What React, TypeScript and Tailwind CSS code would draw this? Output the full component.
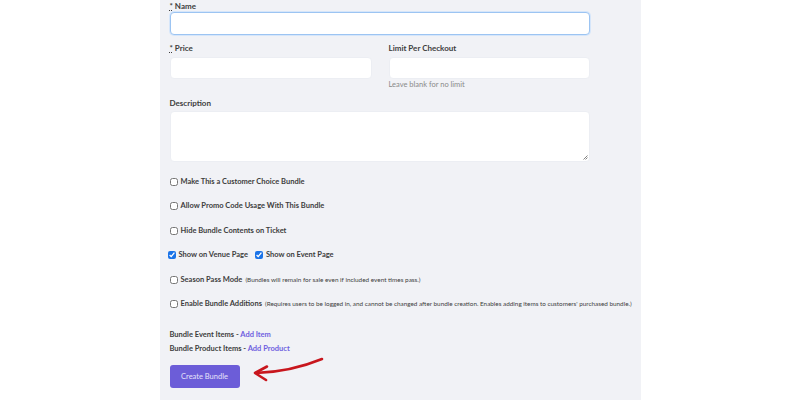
import React from "react";

function Check({ checked = false }: { checked?: boolean }) {
  return (
    <input
      type="checkbox"
      defaultChecked={checked}
      className="w-[8px] h-[8px] m-0 accent-[#1a73e8] shrink-0"
    />
  );
}

export default function App() {
  return (
    <div
      className="w-[800px] h-[400px] bg-white flex justify-center overflow-hidden relative"
      style={{ fontFamily: "Lato, 'Noto Sans', sans-serif" }}
    >
      <div className="w-[481px] h-full bg-[#f1f2f6] pl-[10px] pr-[51px] text-[#3d3d3d]">
        <div className="pt-[1px] h-[12px] text-[8px] leading-[10px] font-bold">
          <span className="underline decoration-dotted">*</span> Name
        </div>
        <div className="h-[23px] mt-[0px] bg-white rounded-[4px] border border-[#9cc4f2] shadow-[0_0_0_1px_#d6e6fa]" />

        <div className="flex gap-[17px] mt-[8px]">
          <div className="w-[202px]">
            <div className="h-[14px] text-[8px] leading-[10px] font-bold">
              <span className="underline decoration-dotted">*</span> Price
            </div>
            <div className="h-[22px] bg-white rounded-[4px] border border-[#eceef3]" />
          </div>
          <div className="flex-1">
            <div className="h-[14px] text-[8px] leading-[10px] font-bold">Limit Per Checkout</div>
            <div className="h-[22px] bg-white rounded-[4px] border border-[#eceef3]" />
            <div className="mt-[1px] text-[7.5px] leading-[10px] text-[#8a8a8a]">Leave blank for no limit</div>
          </div>
        </div>

        <div className="mt-[8px] h-[13px] text-[8px] leading-[10px] font-bold">Description</div>
        <div className="relative h-[51px] bg-white rounded-[4px] border border-[#eceef3]">
          <svg className="absolute right-[1px] bottom-[1px]" width="5" height="5" viewBox="0 0 5 5">
            <path d="M4.5 0.5 L0.5 4.5 M4.5 2.5 L2.5 4.5" stroke="#666" strokeWidth="0.8" />
          </svg>
        </div>

        <div className="mt-[15px] flex flex-col gap-[14.4px] text-[7.5px] leading-[10px] font-bold">
          <label className="flex items-center gap-[3px] h-[10px]">
            <Check /> Make This a Customer Choice Bundle
          </label>
          <label className="flex items-center gap-[3px] h-[10px]">
            <Check /> Allow Promo Code Usage With This Bundle
          </label>
          <label className="flex items-center gap-[3px] h-[10px]">
            <Check /> Hide Bundle Contents on Ticket
          </label>
          <div className="flex items-center gap-[3px] h-[10px] -ml-[2px]">
            <Check checked /> <span>Show on Venue Page</span>
            <span className="w-[1px]" />
            <Check checked /> <span>Show on Event Page</span>
          </div>
          <label className="flex items-center gap-[3px] h-[10px] mt-[0.5px]">
            <Check /> Season Pass Mode{" "}
            <span className="text-[6.4px] font-normal">(Bundles will remain for sale even if included event times pass.)</span>
          </label>
          <label className="flex items-center gap-[3px] h-[10px] whitespace-nowrap">
            <Check /> Enable Bundle Additions{" "}
            <span className="text-[6.35px] font-normal">
              (Requires users to be logged in, and cannot be changed after bundle creation. Enables adding items to customers' purchased bundle.)
            </span>
          </label>
        </div>

        <div className="mt-[19px] text-[7.5px] leading-[14px] font-bold">
          <div>
            Bundle Event Items - <span className="text-[#6f5fe0]">Add Item</span>
          </div>
          <div>
            Bundle Product Items - <span className="text-[#6f5fe0]">Add Product</span>
          </div>
        </div>

        <button className="mt-[9px] w-[70px] h-[23px] rounded-[3px] bg-[#6c5dd8] text-[#e6e2fb] text-[7.5px]">
          Create Bundle
        </button>
      </div>

      <svg className="absolute left-0 top-0 pointer-events-none" width="800" height="400" viewBox="0 0 800 400">
        <path
          d="M322 359 C305 366 285 372 256 373"
          fill="none"
          stroke="#c8161d"
          strokeWidth="2.6"
          strokeLinecap="round"
        />
        <path
          d="M267 366.5 L255 373 L266 380"
          fill="none"
          stroke="#c8161d"
          strokeWidth="2.6"
          strokeLinecap="round"
          strokeLinejoin="round"
        />
      </svg>
    </div>
  );
}
